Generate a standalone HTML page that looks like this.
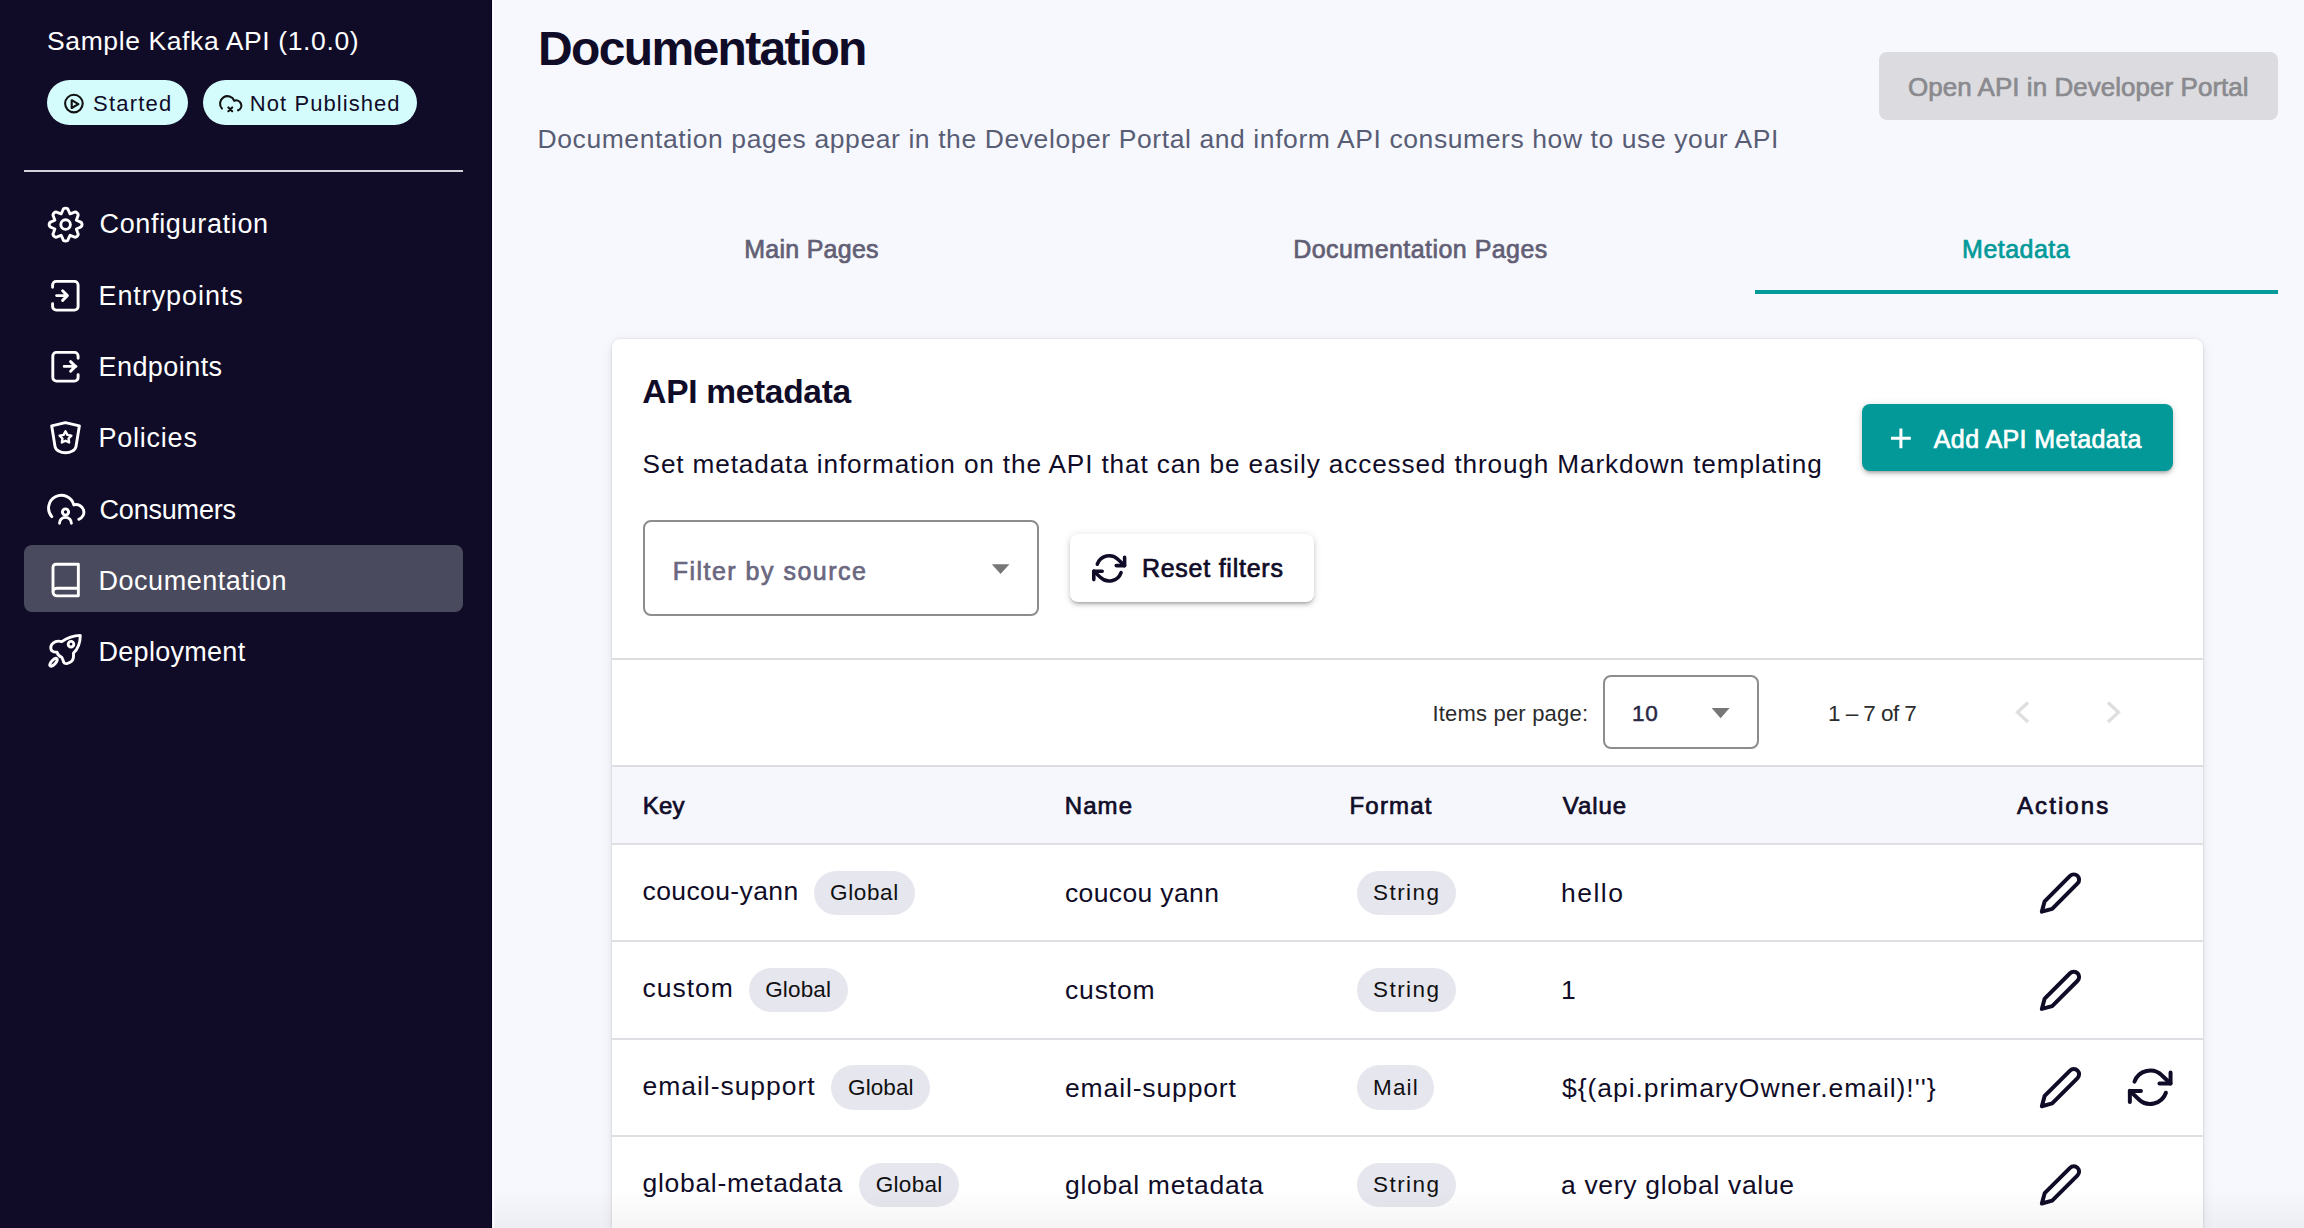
<!DOCTYPE html>
<html><head><meta charset="utf-8"><style>
html,body{margin:0;padding:0;width:2304px;height:1228px;overflow:hidden;background:#f7f8fd;font-family:"Liberation Sans",sans-serif;}
.a{position:absolute;}
.t{position:absolute;white-space:nowrap;line-height:1;}
svg{position:absolute;left:0;top:0;}
</style></head><body>
<div class="a" style="left:0;top:0;width:492px;height:1228px;background:#100c28"></div>
<div class="a" style="left:47px;top:80px;width:141px;height:45px;border-radius:23px;background:#d5fcfd"></div>
<div class="a" style="left:203px;top:80px;width:214px;height:45px;border-radius:23px;background:#d5fcfd"></div>
<div class="a" style="left:24px;top:170px;width:439px;height:2px;background:#d2d2d8"></div>
<div class="a" style="left:24px;top:545px;width:439px;height:67px;border-radius:8px;background:#4a4a5e"></div>

<div class="a" style="left:1879px;top:52px;width:399px;height:68px;border-radius:8px;background:#dcdce0"></div>
<div class="a" style="left:1755px;top:290px;width:523px;height:4px;background:#039a99"></div>

<div class="a" style="left:612px;top:339px;width:1591px;height:889px;border-radius:8px 8px 0 0;background:#fff;box-shadow:0 0 3px rgba(0,0,10,.10),0 2px 4px rgba(0,0,10,.06),0 3px 14px rgba(0,0,10,.07)"></div>
<div class="a" style="left:1862px;top:404px;width:311px;height:67px;border-radius:8px;background:#039999;box-shadow:0 3px 3px -2px rgba(0,0,0,.2),0 3px 4px 0 rgba(0,0,0,.14),0 1px 8px 0 rgba(0,0,0,.12)"></div>
<div class="a" style="left:643px;top:520px;width:392px;height:92px;border:2px solid #8d8d8f;border-radius:8px;background:#fff"></div>
<div class="a" style="left:1070px;top:534px;width:244px;height:68px;border-radius:8px;background:#fff;box-shadow:0 3px 3px -2px rgba(0,0,0,.2),0 3px 4px 0 rgba(0,0,0,.14),0 1px 8px 0 rgba(0,0,0,.12)"></div>
<div class="a" style="left:612px;top:658px;width:1591px;height:2px;background:#dddddd"></div>
<div class="a" style="left:1603px;top:675px;width:152px;height:70px;border:2px solid #8d8d8f;border-radius:8px;background:#fff"></div>
<div class="a" style="left:612px;top:765px;width:1591px;height:79px;background:#f6f7fc"></div>
<div class="a" style="left:612px;top:765px;width:1591px;height:2px;background:#dcdce2"></div>
<div class="a" style="left:612px;top:843.0px;width:1591px;height:2px;background:#dfdfe3"></div>
<div class="a" style="left:612px;top:940.3px;width:1591px;height:2px;background:#dfdfe3"></div>
<div class="a" style="left:612px;top:1037.6px;width:1591px;height:2px;background:#dfdfe3"></div>
<div class="a" style="left:612px;top:1134.9px;width:1591px;height:2px;background:#dfdfe3"></div>

<div class="a" style="left:814.0px;top:870.6px;width:101.0px;height:44.5px;border-radius:23px;background:#e6e6ee"></div>
<div class="a" style="left:1357.0px;top:870.6px;width:98.5px;height:44.5px;border-radius:23px;background:#e6e6ee"></div>
<div class="a" style="left:748.6px;top:967.9px;width:99.1px;height:44.5px;border-radius:23px;background:#e6e6ee"></div>
<div class="a" style="left:1357.0px;top:967.9px;width:98.5px;height:44.5px;border-radius:23px;background:#e6e6ee"></div>
<div class="a" style="left:831.3px;top:1065.2px;width:98.7px;height:44.5px;border-radius:23px;background:#e6e6ee"></div>
<div class="a" style="left:1357.0px;top:1065.2px;width:77.2px;height:44.5px;border-radius:23px;background:#e6e6ee"></div>
<div class="a" style="left:859.1px;top:1162.5px;width:99.9px;height:44.5px;border-radius:23px;background:#e6e6ee"></div>
<div class="a" style="left:1357.0px;top:1162.5px;width:98.5px;height:44.5px;border-radius:23px;background:#e6e6ee"></div>

<div class="a" style="left:492px;top:1188px;width:1812px;height:40px;background:linear-gradient(rgba(0,0,0,0),rgba(0,0,0,.04))"></div>
<div class="a" style="left:491px;top:0;width:1px;height:1228px;background:#04001c"></div>
<div class="a" style="left:493px;top:0;width:1px;height:1228px;background:#ffffff"></div>
<div class="t" style="left:47.00px;top:27.98px;font-size:26.50px;font-weight:400;color:#ffffff;letter-spacing:0.609px;">Sample Kafka API (1.0.0)</div>
<div class="t" style="left:93.00px;top:93.10px;font-size:22.00px;font-weight:400;color:#100c28;letter-spacing:1.202px;">Started</div>
<div class="t" style="left:249.80px;top:93.10px;font-size:22.00px;font-weight:400;color:#100c28;letter-spacing:1.066px;">Not Published</div>
<div class="t" style="left:99.50px;top:211.45px;font-size:27.00px;font-weight:400;color:#ffffff;letter-spacing:0.667px;">Configuration</div>
<div class="t" style="left:98.50px;top:282.75px;font-size:27.00px;font-weight:400;color:#ffffff;letter-spacing:0.920px;">Entrypoints</div>
<div class="t" style="left:98.50px;top:354.05px;font-size:27.00px;font-weight:400;color:#ffffff;letter-spacing:0.438px;">Endpoints</div>
<div class="t" style="left:98.50px;top:425.35px;font-size:27.00px;font-weight:400;color:#ffffff;letter-spacing:0.766px;">Policies</div>
<div class="t" style="left:99.50px;top:496.65px;font-size:27.00px;font-weight:400;color:#ffffff;letter-spacing:-0.187px;">Consumers</div>
<div class="t" style="left:98.50px;top:567.95px;font-size:27.00px;font-weight:400;color:#ffffff;letter-spacing:0.531px;">Documentation</div>
<div class="t" style="left:98.50px;top:639.25px;font-size:27.00px;font-weight:400;color:#ffffff;letter-spacing:0.286px;">Deployment</div>
<div class="t" style="left:538.10px;top:25.20px;font-size:48.00px;font-weight:700;color:#100c28;letter-spacing:-1.666px;">Documentation</div>
<div class="t" style="left:537.50px;top:125.97px;font-size:26.50px;font-weight:400;color:#585d75;letter-spacing:0.587px;">Documentation pages appear in the Developer Portal and inform API consumers how to use your API</div>
<div class="t" style="left:1908.00px;top:73.90px;font-size:26.00px;font-weight:400;color:#8a8a8f;letter-spacing:0.037px;-webkit-text-stroke:0.7px currentColor;">Open API in Developer Portal</div>
<div class="t" style="left:744.30px;top:237.05px;font-size:25.00px;font-weight:400;color:#625f75;letter-spacing:0.251px;-webkit-text-stroke:0.7px currentColor;">Main Pages</div>
<div class="t" style="left:1293.20px;top:237.05px;font-size:25.00px;font-weight:400;color:#625f75;letter-spacing:0.453px;-webkit-text-stroke:0.7px currentColor;">Documentation Pages</div>
<div class="t" style="left:1962.10px;top:237.05px;font-size:25.00px;font-weight:400;color:#039a99;letter-spacing:0.461px;-webkit-text-stroke:0.7px currentColor;">Metadata</div>
<div class="t" style="left:642.30px;top:374.92px;font-size:33.50px;font-weight:700;color:#100c28;letter-spacing:-0.311px;">API metadata</div>
<div class="t" style="left:642.60px;top:451.13px;font-size:26.20px;font-weight:400;color:#100c28;letter-spacing:0.857px;">Set metadata information on the API that can be easily accessed through Markdown templating</div>
<div class="t" style="left:1933.80px;top:426.55px;font-size:25.00px;font-weight:400;color:#ffffff;letter-spacing:0.401px;-webkit-text-stroke:0.7px currentColor;">Add API Metadata</div>
<div class="t" style="left:672.70px;top:558.85px;font-size:25.00px;font-weight:400;color:#6a6780;letter-spacing:1.487px;-webkit-text-stroke:0.7px currentColor;">Filter by source</div>
<div class="t" style="left:1141.90px;top:556.15px;font-size:25.00px;font-weight:400;color:#100c28;letter-spacing:0.751px;-webkit-text-stroke:0.7px currentColor;">Reset filters</div>
<div class="t" style="left:1432.50px;top:703.10px;font-size:22.00px;font-weight:400;color:#2b2b2b;letter-spacing:0.188px;">Items per page:</div>
<div class="t" style="left:1632.10px;top:702.67px;font-size:22.50px;font-weight:400;color:#2a2745;letter-spacing:0.600px;-webkit-text-stroke:0.5px currentColor;">10</div>
<div class="t" style="left:1828.00px;top:702.67px;font-size:22.50px;font-weight:400;color:#2b2b2b;letter-spacing:-0.556px;">1 – 7 of 7</div>
<div class="t" style="left:642.70px;top:794.10px;font-size:24.00px;font-weight:400;color:#100c28;letter-spacing:0.200px;-webkit-text-stroke:0.7px currentColor;">Key</div>
<div class="t" style="left:1064.80px;top:794.10px;font-size:24.00px;font-weight:400;color:#100c28;letter-spacing:1.067px;-webkit-text-stroke:0.7px currentColor;">Name</div>
<div class="t" style="left:1349.50px;top:794.10px;font-size:24.00px;font-weight:400;color:#100c28;letter-spacing:1.200px;-webkit-text-stroke:0.7px currentColor;">Format</div>
<div class="t" style="left:1562.80px;top:794.10px;font-size:24.00px;font-weight:400;color:#100c28;letter-spacing:0.950px;-webkit-text-stroke:0.7px currentColor;">Value</div>
<div class="t" style="left:2017.00px;top:794.10px;font-size:24.00px;font-weight:400;color:#100c28;letter-spacing:2.072px;-webkit-text-stroke:0.7px currentColor;">Actions</div>
<div class="t" style="left:642.50px;top:877.98px;font-size:26.50px;font-weight:400;color:#100c28;letter-spacing:0.400px;">coucou-yann</div>
<div class="t" style="left:1065.00px;top:879.98px;font-size:26.50px;font-weight:400;color:#100c28;letter-spacing:0.360px;">coucou yann</div>
<div class="t" style="left:1561.00px;top:879.98px;font-size:26.50px;font-weight:400;color:#100c28;letter-spacing:1.500px;">hello</div>
<div class="t" style="left:830.00px;top:882.17px;font-size:22.50px;font-weight:400;color:#111111;letter-spacing:0.640px;">Global</div>
<div class="t" style="left:1373.00px;top:882.17px;font-size:22.50px;font-weight:400;color:#111111;letter-spacing:1.440px;">String</div>
<div class="t" style="left:642.50px;top:975.27px;font-size:26.50px;font-weight:400;color:#100c28;letter-spacing:1.000px;">custom</div>
<div class="t" style="left:1065.00px;top:977.27px;font-size:26.50px;font-weight:400;color:#100c28;letter-spacing:0.840px;">custom</div>
<div class="t" style="left:1561.00px;top:977.27px;font-size:26.50px;font-weight:400;color:#100c28;letter-spacing:10.400px;">1</div>
<div class="t" style="left:765.20px;top:979.47px;font-size:22.50px;font-weight:400;color:#111111;letter-spacing:0.160px;">Global</div>
<div class="t" style="left:1373.00px;top:979.47px;font-size:22.50px;font-weight:400;color:#111111;letter-spacing:1.440px;">String</div>
<div class="t" style="left:642.50px;top:1072.57px;font-size:26.50px;font-weight:400;color:#100c28;letter-spacing:0.964px;">email-support</div>
<div class="t" style="left:1065.00px;top:1074.57px;font-size:26.50px;font-weight:400;color:#100c28;letter-spacing:0.862px;">email-support</div>
<div class="t" style="left:1562.00px;top:1074.57px;font-size:26.50px;font-weight:400;color:#100c28;letter-spacing:0.953px;">${(api.primaryOwner.email)!''}</div>
<div class="t" style="left:848.10px;top:1076.77px;font-size:22.50px;font-weight:400;color:#111111;letter-spacing:0.080px;">Global</div>
<div class="t" style="left:1373.00px;top:1076.77px;font-size:22.50px;font-weight:400;color:#111111;letter-spacing:1.141px;">Mail</div>
<div class="t" style="left:642.50px;top:1169.88px;font-size:26.50px;font-weight:400;color:#100c28;letter-spacing:0.694px;">global-metadata</div>
<div class="t" style="left:1065.00px;top:1171.88px;font-size:26.50px;font-weight:400;color:#100c28;letter-spacing:0.683px;">global metadata</div>
<div class="t" style="left:1561.00px;top:1171.88px;font-size:26.50px;font-weight:400;color:#100c28;letter-spacing:0.673px;">a very global value</div>
<div class="t" style="left:875.70px;top:1174.08px;font-size:22.50px;font-weight:400;color:#111111;letter-spacing:0.320px;">Global</div>
<div class="t" style="left:1373.00px;top:1174.08px;font-size:22.50px;font-weight:400;color:#111111;letter-spacing:1.440px;">String</div>
<svg width="2304" height="1228" viewBox="0 0 2304 1228">
<g fill="none" stroke="#ffffff" stroke-width="2.9" stroke-linecap="round" stroke-linejoin="round"><path d="M62.73 210.49 A2.93 2.93 0 0 1 68.47 210.49 L70.04 213.88 L73.55 212.59 A2.93 2.93 0 0 1 77.61 216.65 L76.32 220.16 L79.71 221.73 A2.93 2.93 0 0 1 79.71 227.47 L76.32 229.04 L77.61 232.55 A2.93 2.93 0 0 1 73.55 236.61 L70.04 235.32 L68.47 238.71 A2.93 2.93 0 0 1 62.73 238.71 L61.16 235.32 L57.65 236.61 A2.93 2.93 0 0 1 53.59 232.55 L54.88 229.04 L51.49 227.47 A2.93 2.93 0 0 1 51.49 221.73 L54.88 220.16 L53.59 216.65 A2.93 2.93 0 0 1 57.65 212.59 L61.16 213.88 Z"/><circle cx="65.60" cy="224.60" r="4.8"/><path d="M52.6 287.2 V285 A3.6 3.6 0 0 1 56.2 281.4 H74.5 A3.6 3.6 0 0 1 78.1 285 V306.5 A3.6 3.6 0 0 1 74.5 310.1 H56.2 A3.6 3.6 0 0 1 52.6 306.5 V303.8"/><path d="M56.6 295.6 H67.2 M62.6 290.8 L67.4 295.6 L62.6 300.4"/><path d="M78.1 358.3 V356 A3.6 3.6 0 0 0 74.5 352.4 H56.4 A3.6 3.6 0 0 0 52.8 356 V377.5 A3.6 3.6 0 0 0 56.4 381.1 H74.5 A3.6 3.6 0 0 0 78.1 377.5 V374.6"/><path d="M64.2 366.4 H76 M70.6 361.6 L75.4 366.4 L70.6 371.2"/><path d="M51.7 425.8 L65.4 422.6 L79.4 425.8 L76 446.5 C75.4 450.2 70.5 452.8 65.5 452.8 C60.5 452.8 55.6 450.2 55 446.5 Z"/><path stroke-width="2.4" d="M65.50 431.30 L67.38 434.91 L71.40 435.58 L68.54 438.49 L69.14 442.52 L65.50 440.70 L61.86 442.52 L62.46 438.49 L59.60 435.58 L63.62 434.91 Z"/><path d="M51.8 516.6 A12.8 12.8 0 1 1 73.8 505 A7.5 7.5 0 0 1 78.8 519.3"/><circle cx="65.5" cy="512" r="3.1"/><path d="M59.5 523.3 A5.95 5.95 0 0 1 71.4 523.3"/><path d="M53 592.02 V567.25 A3 3 0 0 1 56 564.25 H78.35 V595.85 H56.82 A3.83 3.83 0 0 1 53 592.02 A3.83 3.83 0 0 1 56.82 588.2 H78.35"/><path d="M80.3 635.4 C74 635.6 66.5 638.3 61.8 641.6 C59.5 641 57.2 641 55.6 641.6 C52.6 642.8 50.7 645.6 50.8 648.2 C50.9 650.6 53.4 652.1 57 652.2 C57.6 654.6 59.6 656.6 61.8 657.4 C62.6 659 63.4 660.6 63.5 662.1 C64 663.4 65.2 663.9 67.4 663.4 C70.8 662.4 73.3 659.8 73.4 657.2 C73.6 655.8 73.5 654.6 73.5 653 C77.5 649.3 80.2 643 80.3 635.4 Z"/><ellipse cx="53.5" cy="662.3" rx="4.9" ry="2.1" transform="rotate(-48 53.5 662.3)"/><circle cx="71" cy="644.2" r="2.8"/></g>
<g fill="none" stroke="#111111" stroke-width="2.1" stroke-linecap="round" stroke-linejoin="round"><circle cx="73.9" cy="103.6" r="8.8"/><path d="M71.7 100.2 L78.4 104.1 L71.7 108 Z"/><path d="M222 108.6 A7.4 7.4 0 1 1 234.3 100.8 A5 5 0 0 1 238.1 110.3"/><path d="M228.4 107.4 L232.2 111.2 M232.2 107.4 L228.4 111.2"/></g>
<g fill="none" stroke="#100c28" stroke-linecap="round" stroke-linejoin="round"><g transform="translate(1092.40 551.60) scale(1.4000)" stroke-width="2.550"><polyline points="23 4 23 10 17 10"/><polyline points="1 20 1 14 7 14"/><path d="M3.51 9a9 9 0 0 1 14.85-3.36L23 10M1 14l4.64 4.36A9 9 0 0 0 20.49 15"/></g><g transform="translate(2038.10 870.30) scale(1.8780)" stroke-width="2.120"><path d="M17 3a2.828 2.828 0 1 1 4 4L7.5 20.5 2 22l1.5-5.5L17 3z"/></g><g transform="translate(2038.10 967.60) scale(1.8780)" stroke-width="2.120"><path d="M17 3a2.828 2.828 0 1 1 4 4L7.5 20.5 2 22l1.5-5.5L17 3z"/></g><g transform="translate(2038.10 1064.90) scale(1.8780)" stroke-width="2.120"><path d="M17 3a2.828 2.828 0 1 1 4 4L7.5 20.5 2 22l1.5-5.5L17 3z"/></g><g transform="translate(2128.00 1065.00) scale(1.8500)" stroke-width="2.160"><polyline points="23 4 23 10 17 10"/><polyline points="1 20 1 14 7 14"/><path d="M3.51 9a9 9 0 0 1 14.85-3.36L23 10M1 14l4.64 4.36A9 9 0 0 0 20.49 15"/></g><g transform="translate(2038.10 1162.20) scale(1.8780)" stroke-width="2.120"><path d="M17 3a2.828 2.828 0 1 1 4 4L7.5 20.5 2 22l1.5-5.5L17 3z"/></g></g>
<g fill="none" stroke="#ffffff" stroke-width="3" stroke-linecap="butt"><path d="M1900.9 428.4 V448.2 M1891 438.3 H1910.8"/></g>
<g fill="#777777"><path d="M991.8 564.2 H1009.4 L1000.6 574 Z"/><path d="M1711.6 708 H1729.6 L1720.6 718.2 Z"/></g>
<g fill="none" stroke="#dedede" stroke-width="3.2"><path d="M2028 702.5 L2017.5 712.3 L2028 722"/><path d="M2108 702.5 L2118.5 712.3 L2108 722"/></g>
</svg>
</body></html>
